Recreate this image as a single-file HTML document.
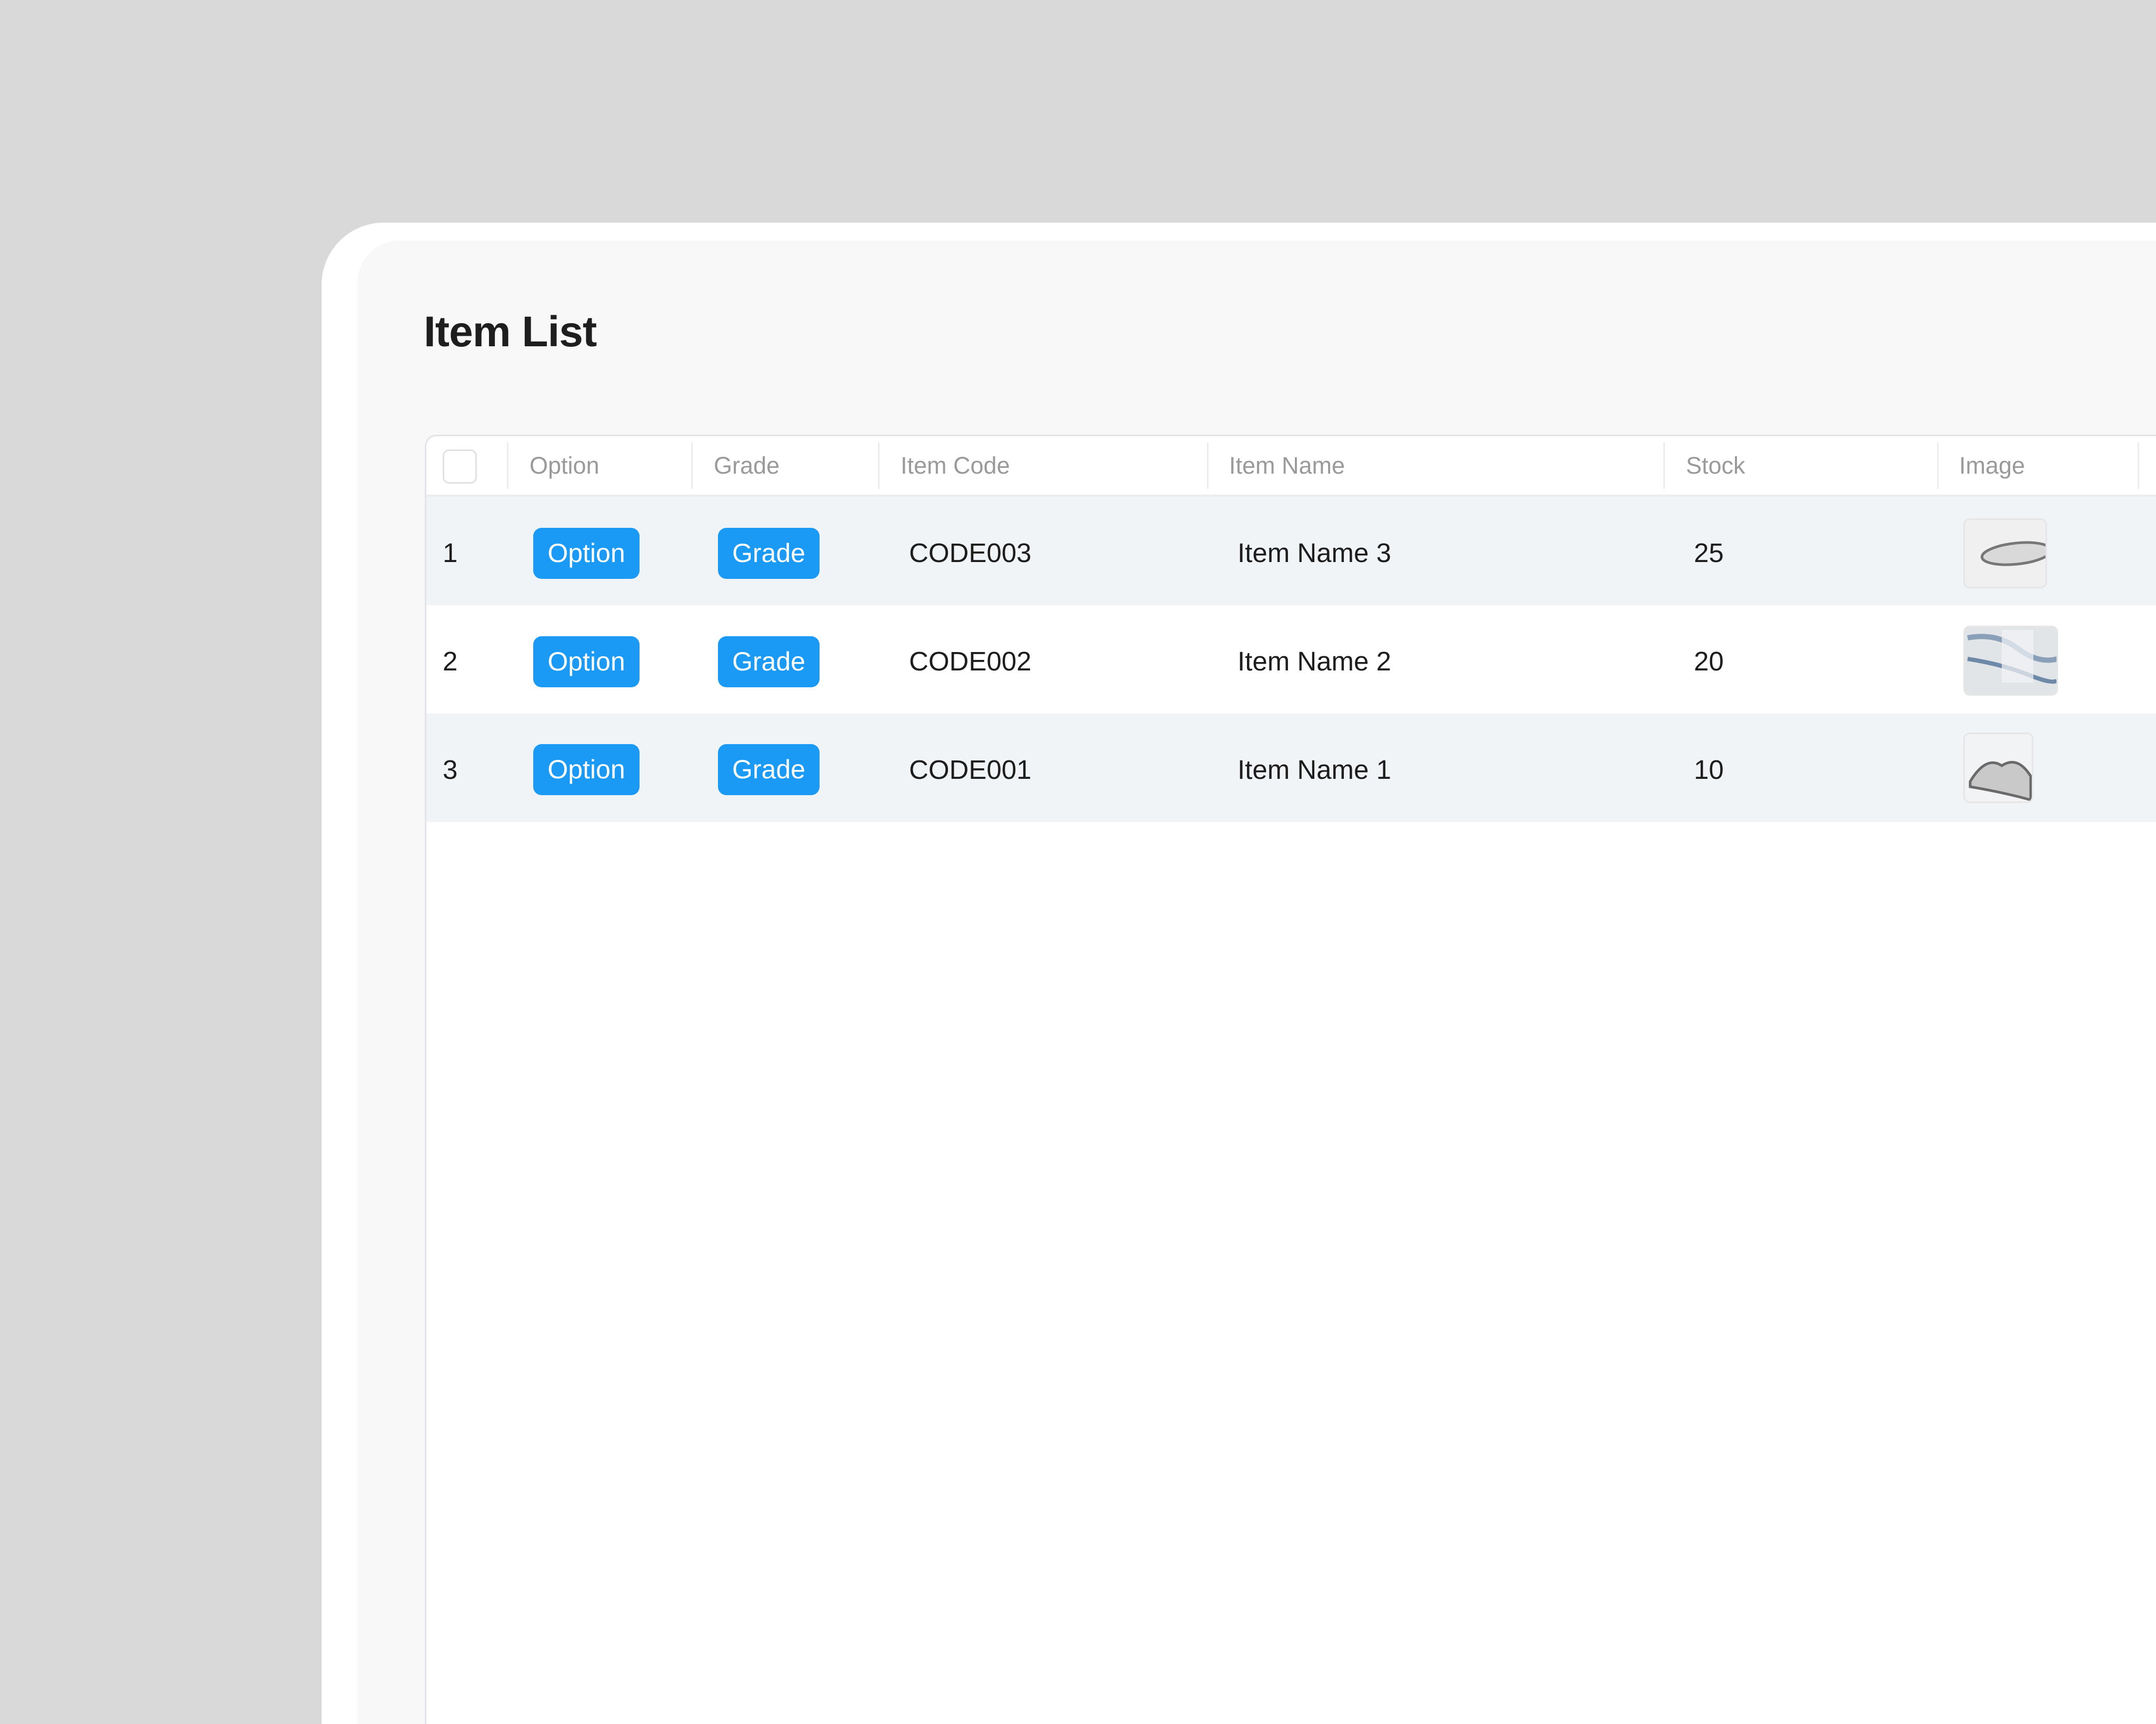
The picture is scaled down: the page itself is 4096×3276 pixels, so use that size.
<!DOCTYPE html>
<html><head><meta charset="utf-8"><style>
*{margin:0;padding:0;box-sizing:border-box}
html,body{width:4096px;height:3276px;overflow:hidden;background:#d9d9d9;font-family:"Liberation Sans",sans-serif;position:relative}
.abs{position:absolute}
#frame{left:611px;top:423px;width:3485px;height:2853px;background:#fff;border-radius:118px 0 0 0}
#panel{left:679px;top:457px;width:3417px;height:2819px;background:#f8f8f8;border-radius:80px 0 0 0}
#title{left:805px;top:584px;font-size:82px;font-weight:bold;color:#1e1e1e;letter-spacing:-1px}
#table{left:807px;top:826px;width:3289px;height:2450px;background:#fff;border:3px solid #e4e4e8;border-right:none;border-bottom:none;border-radius:22px 0 0 0}
.hdr{font-size:45px;color:#9a9a9a;top:859px}
.sep{top:841px;width:3px;height:88px;background:#ececef}
.row{left:810px;width:3286px;height:206px}
.cell{font-size:51px;color:#1d1d1d}
.btn{background:#1a9af5;color:#fff;font-size:50px;border-radius:16px;height:97px;line-height:97px;text-align:center}
.img{border:3px solid #e6e6e6;border-radius:12px;background:#eef0f2;overflow:hidden}
</style></head><body>
<div id="frame" class="abs"></div>
<div id="panel" class="abs"></div>
<div id="title" class="abs">Item List</div>
<div id="table" class="abs"></div>
<div class="abs" style="left:841px;top:854px;width:65px;height:65px;border:3px solid #e2e2e2;border-radius:12px;background:#fff"></div>
<div class="abs sep" style="left:963px"></div>
<div class="abs sep" style="left:1313px"></div>
<div class="abs sep" style="left:1668px"></div>
<div class="abs sep" style="left:2293px"></div>
<div class="abs sep" style="left:3160px"></div>
<div class="abs sep" style="left:3680px"></div>
<div class="abs sep" style="left:4061px"></div>
<div class="abs hdr" style="left:1006px">Option</div>
<div class="abs hdr" style="left:1356px">Grade</div>
<div class="abs hdr" style="left:1711px">Item Code</div>
<div class="abs hdr" style="left:2335px">Item Name</div>
<div class="abs hdr" style="left:3203px">Stock</div>
<div class="abs hdr" style="left:3722px">Image</div>
<div class="abs" style="left:810px;top:940px;width:3286px;height:4px;background:#ececef"></div>

<div class="abs row" style="top:944px;background:#f1f4f7"></div>
<div class="abs row" style="top:1150px;background:#fff"></div>
<div class="abs row" style="top:1356px;background:#f1f4f7"></div>

<div class="abs cell" style="left:841px;top:1021px">1</div>
<div class="abs btn" style="left:1013px;top:1003px;width:202px">Option</div>
<div class="abs btn" style="left:1364px;top:1003px;width:193px">Grade</div>
<div class="abs cell" style="left:1727px;top:1021px">CODE003</div>
<div class="abs cell" style="left:2351px;top:1021px">Item Name 3</div>
<div class="abs cell" style="left:3218px;top:1021px">25</div>
<div class="abs img" style="left:3730px;top:985px;width:159px;height:133px;background:#f0f0f0">
<svg width="159" height="133"><ellipse cx="98" cy="64" rx="66" ry="20" fill="#d9d9d9" stroke="#777" stroke-width="5" transform="rotate(-6 98 64)"/></svg></div>

<div class="abs cell" style="left:841px;top:1227px">2</div>
<div class="abs btn" style="left:1013px;top:1209px;width:202px">Option</div>
<div class="abs btn" style="left:1364px;top:1209px;width:193px">Grade</div>
<div class="abs cell" style="left:1727px;top:1227px">CODE002</div>
<div class="abs cell" style="left:2351px;top:1227px">Item Name 2</div>
<div class="abs cell" style="left:3218px;top:1227px">20</div>
<div class="abs img" style="left:3730px;top:1189px;width:180px;height:133px;background:#e2e5e8">
<svg width="180" height="133"><path d="M5 20 Q60 10 100 40 T175 60" stroke="#8aa0b8" stroke-width="10" fill="none"/><path d="M5 60 Q70 70 120 90 T175 100" stroke="#6f89a8" stroke-width="8" fill="none"/><rect x="70" y="5" width="60" height="100" fill="#f2f4f6" opacity=".7"/></svg></div>

<div class="abs cell" style="left:841px;top:1433px">3</div>
<div class="abs btn" style="left:1013px;top:1414px;width:202px">Option</div>
<div class="abs btn" style="left:1364px;top:1414px;width:193px">Grade</div>
<div class="abs cell" style="left:1727px;top:1433px">CODE001</div>
<div class="abs cell" style="left:2351px;top:1433px">Item Name 1</div>
<div class="abs cell" style="left:3218px;top:1433px">10</div>
<div class="abs img" style="left:3730px;top:1392px;width:133px;height:134px;background:#f1f3f5">
<svg width="133" height="134"><path d="M10 90 Q40 40 70 60 Q100 40 125 80 L125 125 Q70 110 10 100Z" fill="#c9c9c9" stroke="#6a6a6a" stroke-width="5"/></svg></div>
</body></html>
